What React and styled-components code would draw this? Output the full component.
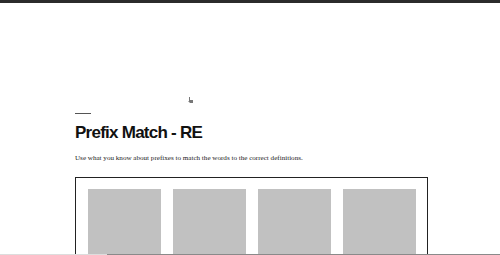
import styled, { createGlobalStyle } from 'styled-components'

const GlobalStyle = createGlobalStyle`
  html, body {
    margin: 0;
    padding: 0;
    background: #fff;
  }
  body {
    font-family: 'Liberation Serif', serif;
    overflow: hidden;
  }
`

const TopBar = styled.div`
  height: 3px;
  background: #2b2b2b;
`

const Page = styled.main`
  position: relative;
  height: 252px;
  padding: 110px 0 0 75px;
  box-sizing: border-box;
`

const Rule = styled.hr`
  width: 16px;
  height: 1px;
  margin: 0 0 7px;
  border: 0;
  background: #555;
`

const Title = styled.h1`
  margin: 0;
  font-family: 'Liberation Sans', Arial, sans-serif;
  font-weight: 700;
  font-size: 17px;
  letter-spacing: -0.75px;
  line-height: 24px;
  color: #111;
`

const Intro = styled.p`
  margin: 8px 0 0;
  font-size: 7.1px;
  line-height: 10px;
  color: #222;
`

const Board = styled.section`
  margin-top: 14px;
  width: 353px;
  box-sizing: border-box;
  border: 1px solid #222;
  padding: 11px 11px 0 12px;
  display: flex;
  gap: 12px;
`

const Tile = styled.div`
  width: 73px;
  height: 73px;
  background: #c1c1c1;
`

const Cursor = styled.svg`
  position: absolute;
  left: 188px;
  top: 94px;
`

const BottomLine = styled.div`
  position: absolute;
  left: 0;
  right: 0;
  bottom: 0;
  height: 1px;
  background: linear-gradient(to right, #ddd 0, #ddd 107px, #8a8a8a 107px);
`

export default function App() {
  return (
    <>
      <GlobalStyle />
      <TopBar />
      <Page>
        <Rule />
        <Title>Prefix Match - RE</Title>
        <Intro>Use what you know about prefixes to match the words to the correct definitions.</Intro>
        <Board>
          {[0, 1, 2, 3].map((i) => (
            <Tile key={i} />
          ))}
        </Board>
        <Cursor width="7" height="7" viewBox="0 0 7 7">
          <path d="M1 0h1v3h3v3H2L0 4h1z" fill="#777" />
        </Cursor>
        <BottomLine />
      </Page>
    </>
  )
}
